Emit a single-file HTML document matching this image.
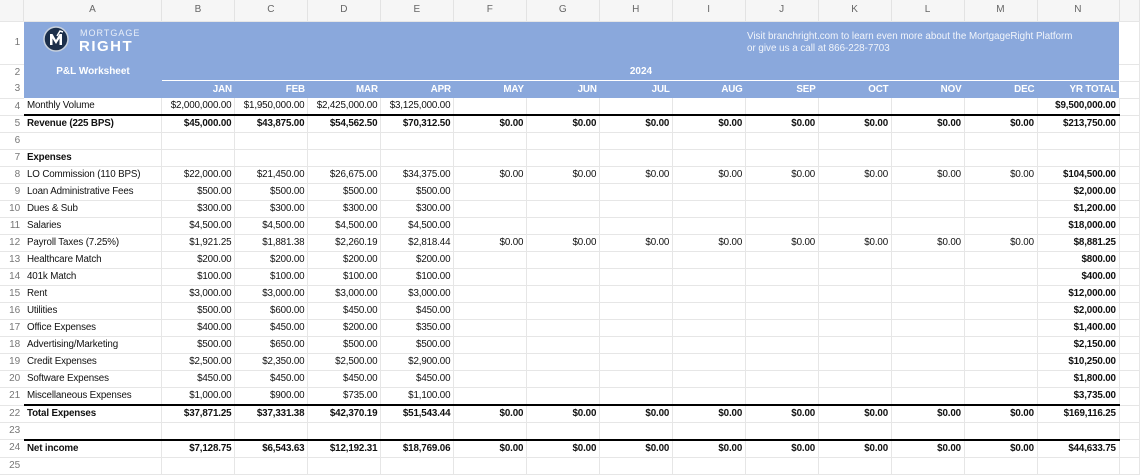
<!DOCTYPE html>
<html><head><meta charset="utf-8"><style>
*{margin:0;padding:0;box-sizing:border-box}
body{width:1140px;height:463px;overflow:hidden;background:#fff;font-family:"Liberation Sans",Arial,sans-serif;font-size:9.8px;color:#111;position:relative}
table{border-collapse:collapse;table-layout:fixed;position:absolute;left:0;top:0}
td{height:17px;border-right:1px solid #e6e6e6;border-bottom:1px solid #e6e6e6;text-align:right;padding:0 3px 0 2px;white-space:nowrap;overflow:hidden;line-height:16px;letter-spacing:-0.15px}
td.l{text-align:left;padding-left:3px}
td.n{text-align:right;color:#777;background:#fff;padding-right:4px;font-size:10px;border-right:none;font-weight:normal!important}
tr.h td{background:#f6f6f6;text-align:center;color:#666;height:21px;font-size:10px;border-right:1px solid #e3e3e3}
tr.b td{font-weight:bold}
td.tk{border-bottom:2px solid #000}
.blue{background:#8aa8dc}
</style></head><body>
<table>
<colgroup><col style="width:24px"><col style="width:138px"><col span="12" style="width:73px"><col style="width:82px"><col style="width:20px"></colgroup>
<tr class="h"><td style="background:#f6f6f6"></td><td>A</td><td>B</td><td>C</td><td>D</td><td>E</td><td>F</td><td>G</td><td>H</td><td>I</td><td>J</td><td>K</td><td>L</td><td>M</td><td>N</td><td></td></tr>
<tr><td class="n" style="height:43px">1</td><td colspan="14" class="blue" style="border:none"></td><td></td></tr>
<tr><td class="n">2</td><td colspan="14" class="blue" style="border:none"></td><td></td></tr>
<tr><td class="n">3</td><td colspan="14" class="blue" style="border:none"></td><td></td></tr>
</table>
<div style="position:absolute;left:162px;top:80px;width:958px;height:2px;background:#fff"></div>
<svg style="position:absolute;left:43px;top:26px" width="26" height="26" viewBox="0 0 26 26"><circle cx="13" cy="13" r="12" fill="#1c2f4a" stroke="#c9d2de" stroke-width="1.5"/><path d="M7 19V8h2.5l3.5 6 3.5-6H19v11h-2.5v-6.5L13 18l-3.5-5.5V19z" fill="#fff"/><path d="M14 10l3-5 3 1" stroke="#fff" stroke-width="1.5" fill="none"/></svg>
<div style="position:absolute;left:80px;top:29px;color:#e8eef8;font-size:9px;letter-spacing:1px;line-height:9px">MORTGAGE</div>
<div style="position:absolute;left:79px;top:39px;color:#fff;font-size:15px;font-weight:bold;letter-spacing:1.5px;line-height:15px">RIGHT</div>
<div style="position:absolute;left:24px;top:66px;width:138px;text-align:center;color:#fff;font-weight:bold;font-size:10px">P&amp;L Worksheet</div>
<div style="position:absolute;left:600px;top:66px;width:82px;text-align:center;color:#fff;font-weight:bold;font-size:10px">2024</div>
<div style="position:absolute;left:747px;top:31px;color:#f2f5fb;font-size:9.8px;line-height:12px">Visit branchright.com to learn even more about the MortgageRight Platform<br>or give us a call at 866-228-7703</div>
<table style="top:81px" id="t2">
<colgroup><col style="width:24px"><col style="width:138px"><col span="12" style="width:73px"><col style="width:82px"><col style="width:20px"></colgroup>
<tbody id="tb"></tbody>
</table>
<script>
var hd=["JAN","FEB","MAR","APR","MAY","JUN","JUL","AUG","SEP","OCT","NOV","DEC","YR TOTAL"];
var h='<tr><td class="n">3</td><td class="blue" style="border:none"></td>';
hd.forEach(function(x){h+='<td class="blue" style="border:none;color:#fff;font-weight:bold">'+x+'</td>'});
h+='<td></td></tr>';
var z="$0.00",Z=[z,z,z,z,z,z,z,z];
var e=["","","","","","","",""];
var rows=[
[4,"Monthly Volume",["$2,000,000.00","$1,950,000.00","$2,425,000.00","$3,125,000.00"].concat(e),"$9,500,000.00",0,1],
[5,"Revenue (225 BPS)",["$45,000.00","$43,875.00","$54,562.50","$70,312.50"].concat(Z),"$213,750.00",1,0],
[6,"",["","","",""].concat(e),"",0,0],
[7,"Expenses",["","","",""].concat(e),"",1,0],
[8,"LO Commission (110 BPS)",["$22,000.00","$21,450.00","$26,675.00","$34,375.00"].concat(Z),"$104,500.00",0,0],
[9,"Loan Administrative Fees",["$500.00","$500.00","$500.00","$500.00"].concat(e),"$2,000.00",0,0],
[10,"Dues & Sub",["$300.00","$300.00","$300.00","$300.00"].concat(e),"$1,200.00",0,0],
[11,"Salaries",["$4,500.00","$4,500.00","$4,500.00","$4,500.00"].concat(e),"$18,000.00",0,0],
[12,"Payroll Taxes (7.25%)",["$1,921.25","$1,881.38","$2,260.19","$2,818.44"].concat(Z),"$8,881.25",0,0],
[13,"Healthcare Match",["$200.00","$200.00","$200.00","$200.00"].concat(e),"$800.00",0,0],
[14,"401k Match",["$100.00","$100.00","$100.00","$100.00"].concat(e),"$400.00",0,0],
[15,"Rent",["$3,000.00","$3,000.00","$3,000.00","$3,000.00"].concat(e),"$12,000.00",0,0],
[16,"Utilities",["$500.00","$600.00","$450.00","$450.00"].concat(e),"$2,000.00",0,0],
[17,"Office Expenses",["$400.00","$450.00","$200.00","$350.00"].concat(e),"$1,400.00",0,0],
[18,"Advertising/Marketing",["$500.00","$650.00","$500.00","$500.00"].concat(e),"$2,150.00",0,0],
[19,"Credit Expenses",["$2,500.00","$2,350.00","$2,500.00","$2,900.00"].concat(e),"$10,250.00",0,0],
[20,"Software Expenses",["$450.00","$450.00","$450.00","$450.00"].concat(e),"$1,800.00",0,0],
[21,"Miscellaneous Expenses",["$1,000.00","$900.00","$735.00","$1,100.00"].concat(e),"$3,735.00",0,1],
[22,"Total Expenses",["$37,871.25","$37,331.38","$42,370.19","$51,543.44"].concat(Z),"$169,116.25",1,0],
[23,"",["","","",""].concat(e),"",0,1],
[24,"Net income",["$7,128.75","$6,543.63","$12,192.31","$18,769.06"].concat(Z),"$44,633.75",1,0],
[25,"",["","","",""].concat(e),"",0,0]];
rows.forEach(function(r){
 var c=r[5]?' class="tk"':'';
 var cl=r[5]?' class="l tk"':' class="l"';
 h+='<tr'+(r[4]?' class="b"':'')+'><td class="n">'+r[0]+'</td><td'+cl+'>'+r[1].replace("&","&amp;")+'</td>';
 r[2].forEach(function(v){h+='<td'+c+'>'+v+'</td>'});
 h+='<td'+c+' style="font-weight:bold">'+r[3]+'</td><td></td></tr>';
});
document.getElementById('tb').innerHTML=h;
</script>
</body></html>
